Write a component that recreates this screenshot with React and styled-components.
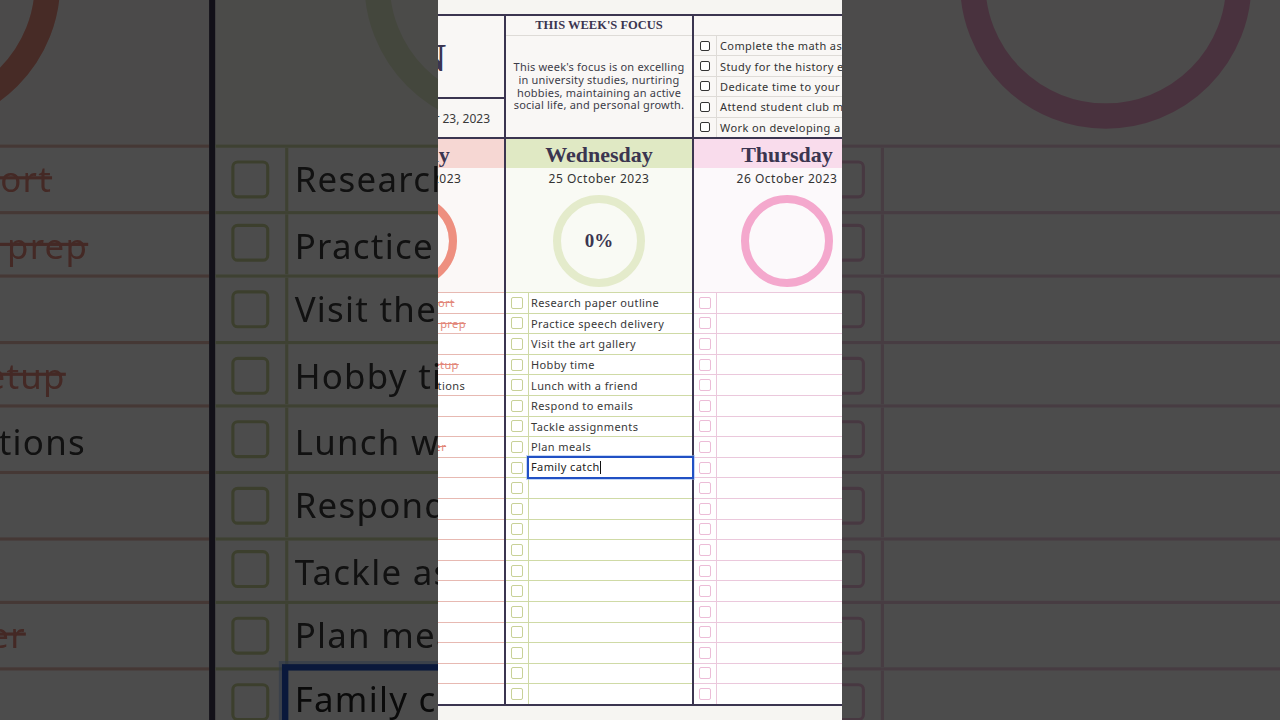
import React from "react";
import styled, { createGlobalStyle } from "styled-components";

const GlobalStyle = createGlobalStyle`
  html, body {
    margin: 0;
    padding: 0;
  }
  body {
    width: 1280px;
    height: 720px;
    overflow: hidden;
    background: #4b4b4b;
    font-family: "Noto Sans", "Liberation Sans", sans-serif;
  }
`;

const INK = "#3b3550";
const SOFT = "#dedbd7";

const tones = {
  mon: { band: "#dfe3f1", info: "#f8f9fc", line: "#c9cfe6", box: "#b9c1e0", ring: "#aab5de", track: "#e3e7f4", strike: "#8d99c9" },
  tue: { band: "#f6d7d3", info: "#fbf8f7", line: "#e7b9b2", box: "#e8aa9f", ring: "#ee8f7f", track: "#f7d9d4", strike: "#e2877a" },
  wed: { band: "#e0e9c4", info: "#f9faf4", line: "#cfdaa6", box: "#c8d197", ring: "#e4ebcb", track: "#e4ebcb", strike: "#a8b56e" },
  thu: { band: "#f9dcec", info: "#fcf9fb", line: "#ebc8dc", box: "#ecbcd7", ring: "#f4a8cd", track: "#f4a8cd", strike: "#d68fb6" },
  fri: { band: "#fde8cf", info: "#fdfaf6", line: "#efd3b0", box: "#ebc89c", ring: "#f3c48c", track: "#f8e3c8", strike: "#d9a262" },
};

const pad = (list) => [...list, ...Array(20 - list.length).fill(null)];

const days = [
  {
    name: "Monday",
    date: "23 October 2023",
    tone: tones.mon,
    progress: 67,
    tasks: pad([
      { text: "Morning lecture notes", done: true },
      { text: "Gym session", done: true },
      { text: "Grocery shopping", done: false },
    ]),
  },
  {
    name: "Tuesday",
    date: "24 October 2023",
    tone: tones.tue,
    progress: 80,
    tasks: pad([
      { text: "Complete lab report", done: true },
      { text: "Lab presentation prep", done: true },
      null,
      { text: "Student club meetup", done: true },
      { text: "Review quiz questions", done: false },
      null,
      null,
      { text: "Cook a nice dinner", done: true },
    ]),
  },
  {
    name: "Wednesday",
    date: "25 October 2023",
    tone: tones.wed,
    progress: 0,
    label: "0%",
    tasks: pad([
      { text: "Research paper outline" },
      { text: "Practice speech delivery" },
      { text: "Visit the art gallery" },
      { text: "Hobby time" },
      { text: "Lunch with a friend" },
      { text: "Respond to emails" },
      { text: "Tackle assignments" },
      { text: "Plan meals" },
      { text: "Family catch", editing: true },
    ]),
  },
  {
    name: "Thursday",
    date: "26 October 2023",
    tone: tones.thu,
    progress: 0,
    tasks: pad([]),
  },
  {
    name: "Friday",
    date: "27 October 2023",
    tone: tones.fri,
    progress: 0,
    tasks: pad([]),
  },
];

const goals = [
  "Complete the math assignment",
  "Study for the history exam",
  "Dedicate time to your hobby",
  "Attend student club meeting",
  "Work on developing a new skill",
];

function Ring({ tone, progress, label }) {
  const r = 42;
  const c = 2 * Math.PI * r;
  return (
    <RingWrap>
      <svg width="94" height="94" viewBox="0 0 94 94">
        <circle cx="47" cy="47" r={r} fill="none" stroke={tone.track} strokeWidth="8" />
        {progress > 0 && (
          <circle
            cx="47"
            cy="47"
            r={r}
            fill="none"
            stroke={tone.ring}
            strokeWidth="8"
            strokeDasharray={`${(c * progress) / 100} ${c}`}
            transform="rotate(-90 47 47)"
          />
        )}
      </svg>
      {label && <RingLabel>{label}</RingLabel>}
    </RingWrap>
  );
}

function DayColumn({ day }) {
  const { tone } = day;
  return (
    <Column>
      <Band $bg={tone.band}>{day.name}</Band>
      <Info $bg={tone.info}>
        <DateLabel>{day.date}</DateLabel>
        <Ring tone={tone} progress={day.progress} label={day.progress > 0 ? `${day.progress}%` : day.label} />
      </Info>
      {day.tasks.map((task, i) => (
        <TaskRow key={i} $line={tone.line}>
          <BoxCell $line={tone.line}>
            <RowBox $color={tone.box} />
          </BoxCell>
          {task && task.editing ? (
            <EditCell>
              {task.text}
              <Caret />
            </EditCell>
          ) : (
            <TaskText $done={task && task.done} $strike={tone.strike}>
              {task ? task.text : ""}
            </TaskText>
          )}
        </TaskRow>
      ))}
    </Column>
  );
}

function Planner({ front }) {
  return (
    <Viewport $front={front}>
      <Sheet>
        <Header>
          <TitleBlock>
            <TitleTop>WEEKLY PLAN</TitleTop>
            <WeekRow>Week of October 23, 2023</WeekRow>
          </TitleBlock>
          <FocusBlock>
            <FocusTitle>This week's focus</FocusTitle>
            <FocusText>
              This week's focus is on excelling
              <br />
              in university studies, nurtiring
              <br />
              hobbies, maintaining an active
              <br />
              social life, and personal growth.
            </FocusText>
          </FocusBlock>
          <GoalBlock>
            <GoalHead>TO DO</GoalHead>
            {goals.map((g) => (
              <GoalRow key={g}>
                <GoalBoxCell>
                  <GoalBox />
                </GoalBoxCell>
                <GoalText>{g}</GoalText>
              </GoalRow>
            ))}
          </GoalBlock>
        </Header>
        <DayGrid>
          {days.map((d) => (
            <DayColumn key={d.name} day={d} />
          ))}
        </DayGrid>
      </Sheet>
    </Viewport>
  );
}

export default function App() {
  return (
    <>
      <GlobalStyle />
      <Stage>
        <Backdrop>
          <Zoomed>
            <Planner />
          </Zoomed>
        </Backdrop>
        <Planner front />
      </Stage>
    </>
  );
}

const Stage = styled.div`
  position: relative;
  width: 1280px;
  height: 720px;
  overflow: hidden;
  display: flex;
  justify-content: center;
  align-items: center;
  background: #4b4b4b;
`;

const Backdrop = styled.div`
  position: absolute;
  inset: 0;
  display: flex;
  justify-content: center;
  align-items: center;
  filter: brightness(0.3) blur(0.4px);
`;

const Zoomed = styled.div`
  flex: none;
  transform: scale(3.1683);
  transform-origin: center center;
`;

const Viewport = styled.div`
  position: relative;
  z-index: ${(p) => (p.$front ? 1 : 0)};
  flex: none;
  width: 404px;
  height: 720px;
  overflow: hidden;
  box-sizing: border-box;
  padding-top: 14px;
  background: #f6f5f2;
`;

const Sheet = styled.div`
  width: 940px;
  margin-left: -310px;
  border-top: 2px solid ${INK};
  border-bottom: 2px solid ${INK};
  background: #fff;
  color: #383838;
`;

const Header = styled.div`
  display: grid;
  grid-template-columns: 376px 188px 376px;
  height: 121px;
  background: #f9f7f5;
  border-bottom: 2px solid ${INK};
`;

const TitleBlock = styled.div`
  display: flex;
  flex-direction: column;
  min-width: 0;
`;

const TitleTop = styled.div`
  height: 81px;
  border-bottom: 2px solid ${INK};
  display: flex;
  align-items: center;
  justify-content: flex-end;
  padding-right: 58px;
  white-space: nowrap;
  overflow: hidden;
  font-family: "Liberation Serif", serif;
  font-weight: 700;
  font-size: 41px;
  color: ${INK};
`;

const WeekRow = styled.div`
  flex: 1;
  display: flex;
  align-items: center;
  justify-content: flex-end;
  padding-right: 14px;
  font-size: 12px;
  color: #3a3a3a;
`;

const FocusBlock = styled.div`
  border-left: 2px solid ${INK};
  display: flex;
  flex-direction: column;
`;

const FocusTitle = styled.div`
  height: 19px;
  border-bottom: 1px solid ${SOFT};
  display: flex;
  align-items: center;
  justify-content: center;
  font-family: "Liberation Serif", serif;
  font-weight: 700;
  font-size: 12.5px;
  text-transform: uppercase;
  color: ${INK};
`;

const FocusText = styled.div`
  flex: 1;
  display: flex;
  align-items: center;
  justify-content: center;
  text-align: center;
  font-size: 11px;
  letter-spacing: 0.2px;
  line-height: 12.7px;
  color: #3c3c48;
`;

const GoalBlock = styled.div`
  border-left: 2px solid ${INK};
  display: flex;
  flex-direction: column;
`;

const GoalHead = styled.div`
  height: 19px;
  display: flex;
  align-items: center;
  justify-content: center;
  font-family: "Liberation Serif", serif;
  font-weight: 700;
  font-size: 12.5px;
  color: ${INK};
`;

const GoalRow = styled.div`
  display: grid;
  grid-template-columns: 23px 1fr;
  height: 20.4px;
  box-sizing: border-box;
  border-top: 1px solid ${SOFT};
`;

const GoalBoxCell = styled.div`
  display: flex;
  align-items: center;
  justify-content: center;
  border-right: 1px solid ${SOFT};
`;

const GoalBox = styled.span`
  width: 10px;
  height: 10px;
  box-sizing: border-box;
  border: 1.3px solid #333;
  border-radius: 2px;
  background: #fff;
`;

const GoalText = styled.div`
  padding-left: 3px;
  display: flex;
  align-items: center;
  font-size: 11px;
  letter-spacing: 0.4px;
  white-space: nowrap;
  overflow: hidden;
  color: #333;
`;

const DayGrid = styled.div`
  display: grid;
  grid-template-columns: repeat(5, 188px);
`;

const Column = styled.div`
  border-left: 2px solid ${INK};
  display: flex;
  flex-direction: column;
  min-width: 0;
`;

const Band = styled.div`
  height: 29px;
  box-sizing: border-box;
  padding-top: 2px;
  background: ${(p) => p.$bg};
  display: flex;
  align-items: center;
  justify-content: center;
  font-family: "Liberation Serif", serif;
  font-weight: 700;
  font-size: 22px;
  color: ${INK};
`;

const Info = styled.div`
  height: 124px;
  box-sizing: border-box;
  padding-top: 3px;
  background: ${(p) => p.$bg};
  display: flex;
  flex-direction: column;
  align-items: center;
  gap: 7px;
`;

const DateLabel = styled.div`
  font-size: 12px;
  letter-spacing: 0.5px;
  line-height: 16px;
  color: #333;
`;

const RingWrap = styled.div`
  position: relative;
  width: 94px;
  height: 94px;
  display: flex;
  align-items: center;
  justify-content: center;
  svg {
    position: absolute;
    inset: 0;
  }
`;

const RingLabel = styled.span`
  position: relative;
  font-family: "Liberation Serif", serif;
  font-weight: 700;
  font-size: 19px;
  color: ${INK};
`;

const TaskRow = styled.div`
  display: grid;
  grid-template-columns: 23px 1fr;
  height: 20.6px;
  box-sizing: border-box;
  border-top: 1px solid ${(p) => p.$line};
  background: #fff;
`;

const BoxCell = styled.div`
  display: flex;
  align-items: center;
  justify-content: center;
  border-right: 1px solid ${(p) => p.$line};
`;

const RowBox = styled.span`
  width: 12px;
  height: 12px;
  box-sizing: border-box;
  border: 1.5px solid ${(p) => p.$color};
  border-radius: 2px;
`;

const TaskText = styled.div`
  padding-left: 2px;
  display: flex;
  align-items: center;
  font-size: 11px;
  letter-spacing: 0.4px;
  white-space: nowrap;
  overflow: hidden;
  color: ${(p) => (p.$done ? p.$strike : "#383838")};
  text-decoration: ${(p) => (p.$done ? "line-through" : "none")};
`;

const EditCell = styled.div`
  position: relative;
  z-index: 2;
  padding: 1px 2px 0;
  display: flex;
  align-items: flex-start;
  font-size: 11px;
  letter-spacing: 0.4px;
  white-space: nowrap;
  color: #222;
  background: #fff;
  outline: 2px solid #2150c4;
  box-shadow: 0 0 0 3px rgba(150, 182, 238, 0.55);
`;

const Caret = styled.span`
  display: inline-block;
  width: 1px;
  height: 13px;
  margin-top: 2px;
  background: #111;
`;
